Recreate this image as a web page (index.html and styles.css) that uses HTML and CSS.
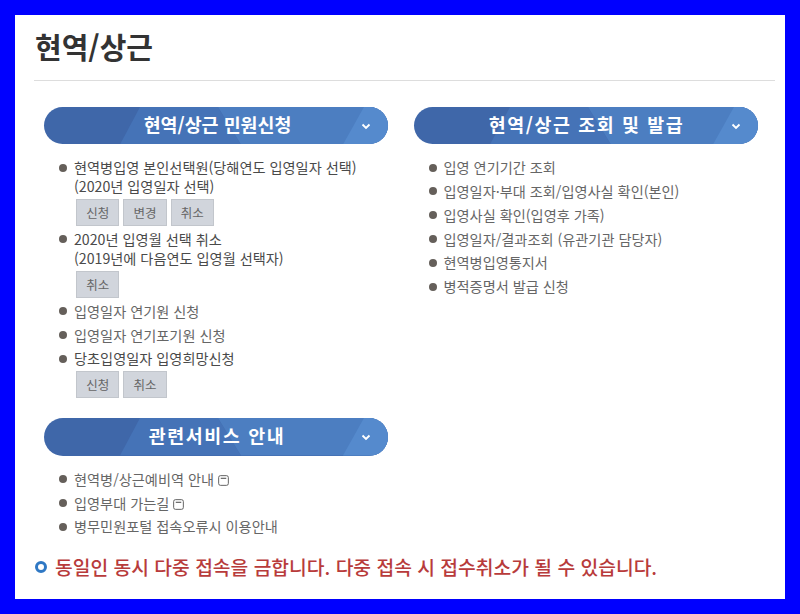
FILE: index.html
```html
<!DOCTYPE html>
<html lang="ko">
<head>
<meta charset="utf-8">
<title>현역/상근</title>
<link rel="stylesheet" href="styles.css">
</head>
<body>
<main class="frame">
  <h1 class="title">현역/상근</h1>
  <div class="columns">
    <div class="col">
      <section class="group">
        <h2 class="pill">
          <svg class="pill-art" viewBox="0 0 344 38" preserveAspectRatio="none" aria-hidden="true"><polygon points="96,0 174,0 197,38 76,38" fill="#4573b7"/><polygon points="174,0 344,0 344,38 197,38" fill="#4c7ec1"/><polygon points="320,0 344,0 344,38 299,38" fill="#558acd"/></svg>
          <span class="pill-text">현역/상근 민원신청</span>
          <svg class="chev" viewBox="0 0 10 7" aria-hidden="true"><path d="M1.5 1.5 5 5l3.5-3.5" fill="none" stroke="#fff" stroke-width="1.9"/></svg>
        </h2>
        <ul class="list">
          <li class="item dark">현역병입영 본인선택원(당해연도 입영일자 선택)<br>(2020년 입영일자 선택)
            <div class="btns"><a class="btn">신청</a><a class="btn">변경</a><a class="btn">취소</a></div></li>
          <li class="item dark">2020년 입영월 선택 취소<br>(2019년에 다음연도 입영월 선택자)
            <div class="btns"><a class="btn">취소</a></div></li>
          <li class="item">입영일자 연기원 신청</li>
          <li class="item">입영일자 연기포기원 신청</li>
          <li class="item dark">당초입영일자 입영희망신청
            <div class="btns"><a class="btn">신청</a><a class="btn">취소</a></div></li>
        </ul>
      </section>
      <section class="group second">
        <h2 class="pill">
          <svg class="pill-art" viewBox="0 0 344 38" preserveAspectRatio="none" aria-hidden="true"><polygon points="96,0 174,0 197,38 76,38" fill="#4573b7"/><polygon points="174,0 344,0 344,38 197,38" fill="#4c7ec1"/><polygon points="320,0 344,0 344,38 299,38" fill="#558acd"/></svg>
          <span class="pill-text wide">관련서비스 안내</span>
          <svg class="chev" viewBox="0 0 10 7" aria-hidden="true"><path d="M1.5 1.5 5 5l3.5-3.5" fill="none" stroke="#fff" stroke-width="1.9"/></svg>
        </h2>
        <ul class="list">
          <li class="item">현역병/상근예비역 안내 <svg class="ext" viewBox="0 0 12 12" aria-hidden="true"><rect x=".7" y=".7" width="10.6" height="10.6" rx="2" fill="none" stroke="#555" stroke-width="1"/><path d="M3 3.6h6" stroke="#555" stroke-width="1.2"/></svg></li>
          <li class="item">입영부대 가는길 <svg class="ext" viewBox="0 0 12 12" aria-hidden="true"><rect x=".7" y=".7" width="10.6" height="10.6" rx="2" fill="none" stroke="#555" stroke-width="1"/><path d="M3 3.6h6" stroke="#555" stroke-width="1.2"/></svg></li>
          <li class="item">병무민원포털 접속오류시 이용안내</li>
        </ul>
      </section>
    </div>
    <div class="col">
      <section class="group">
        <h2 class="pill">
          <svg class="pill-art" viewBox="0 0 344 38" preserveAspectRatio="none" aria-hidden="true"><polygon points="96,0 174,0 197,38 76,38" fill="#4573b7"/><polygon points="174,0 344,0 344,38 197,38" fill="#4c7ec1"/><polygon points="320,0 344,0 344,38 299,38" fill="#558acd"/></svg>
          <span class="pill-text wide">현역/상근 조회 및 발급</span>
          <svg class="chev" viewBox="0 0 10 7" aria-hidden="true"><path d="M1.5 1.5 5 5l3.5-3.5" fill="none" stroke="#fff" stroke-width="1.9"/></svg>
        </h2>
        <ul class="list">
          <li class="item">입영 연기기간 조회</li>
          <li class="item">입영일자·부대 조회/입영사실 확인(본인)</li>
          <li class="item">입영사실 확인(입영후 가족)</li>
          <li class="item">입영일자/결과조회 (유관기관 담당자)</li>
          <li class="item">현역병입영통지서</li>
          <li class="item">병적증명서 발급 신청</li>
        </ul>
      </section>
    </div>
  </div>
  <p class="notice"><span class="ring"></span>동일인 동시 다중 접속을 금합니다. 다중 접속 시 접수취소가 될 수 있습니다.</p>
</main>
</body>
</html>
```
FILE: styles.css
```css
* { box-sizing: border-box; }
html, body { margin: 0; padding: 0; }
body { width: 800px; height: 614px; background: #fff; overflow: hidden; font-family: "Noto Sans CJK KR", "Noto Sans", sans-serif; }
.frame { width: 800px; height: 614px; border: 15px solid #0000ff; background: #fff; padding: 0 10px 0 19px; display: flex; flex-direction: column; }
.title { margin: 0; height: 66px; padding: 8px 0 11px 1px; font-size: 29px; line-height: 46px; font-weight: 700; color: #333; border-bottom: 1px solid #ddd; }
.columns { display: flex; gap: 25.5px; padding: 25.7px 0 0 10px; flex: 1; }
.col { width: 344px; }
.pill { position: relative; margin: 0; height: 37.5px; border-radius: 19px; background: #3f67a9; overflow: hidden; color: #fff; font-size: 18.4px; font-weight: 700; line-height: 34px; text-align: center; }
.pill-art { position: absolute; inset: 0; width: 100%; height: 100%; }
.pill-text { position: relative; display: block; padding-left: 3px; }
.pill-text.wide { letter-spacing: 1.6px; padding-left: 2px; }
.chev { position: absolute; right: 17px; top: 16px; width: 10px; height: 7px; }
.list { list-style: none; margin: 0; padding: 11.5px 0 0 30px; }
.item { position: relative; font-size: 14.2px; line-height: 18.5px; padding: 2.65px 0; color: #666; }
.item.dark { color: #4a4a4a; }
.item::before { content: ""; position: absolute; left: -15px; top: 8px; width: 8px; height: 8px; border-radius: 50%; background: #655f5a; }
.btns { display: flex; gap: 4px; margin: 3.5px 0 -1px 2px; }
.btn { width: 43.3px; height: 27px; background: #d1d5dc; border: 1px solid #c2c6cc; font-size: 12.5px; line-height: 25px; text-align: center; color: #666; }
.ext { display: inline-block; width: 11px; height: 11px; vertical-align: -1px; }
.second { margin-top: 18px; }
.notice { display: flex; align-items: center; gap: 8px; margin: 0 0 20px 1px; font-size: 19.25px; line-height: 24px; font-weight: 500; color: #b83b3b; }
.ring { width: 12px; height: 12px; border: 3.5px solid #2f78c4; border-radius: 50%; background: #fff; flex: none; }
```
